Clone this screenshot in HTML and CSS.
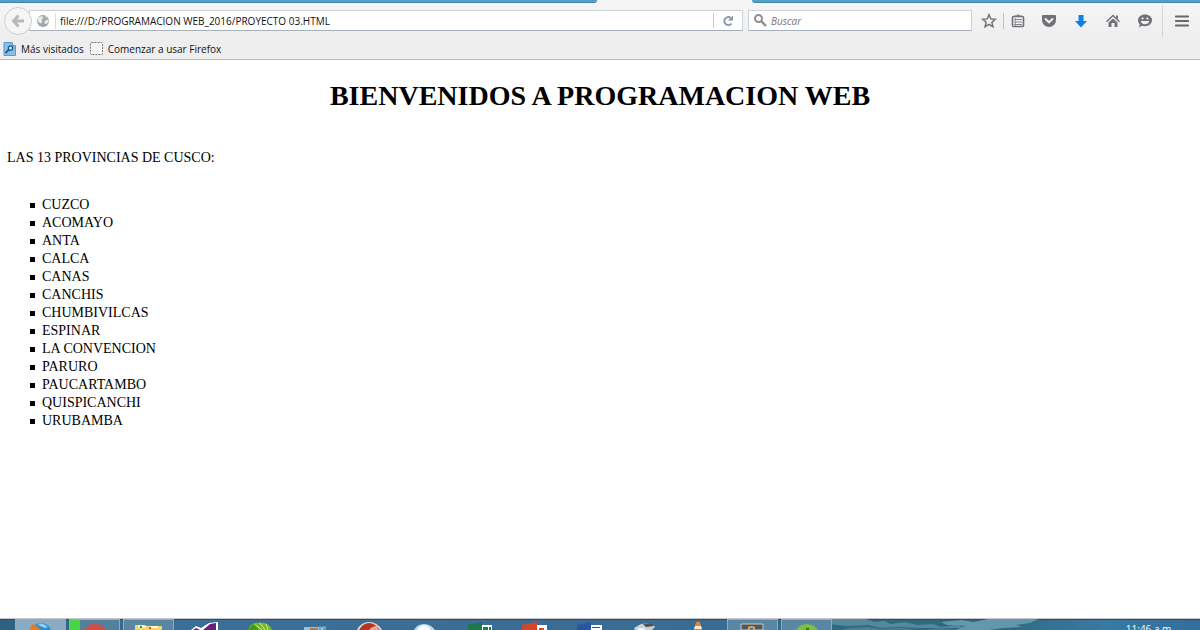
FILE: index.html
```html
<!DOCTYPE html>
<html lang="es">
<head>
    <meta charset="UTF-8">
    <meta name="viewport" content="width=device-width, initial-scale=1.0">
    <title>PROYECTO 03</title>
    <link rel="stylesheet" href="styles.css">
</head>
<body>
    <header class="browser">
        <div class="tab-strip">
            <div class="tab-strip-left"></div>
            <div class="tab-strip-right"></div>
        </div>

        <div class="toolbar">
            <button class="back-button" type="button" aria-label="Atrás">
                <svg width="14" height="14" viewBox="0 0 14 14"><path d="M7.5 1.5L2.500 7l5 5.500M3 7h10" fill="none" stroke="#b9b9b9" stroke-width="3"/></svg>
            </button>
            <div class="url-bar">
                <svg class="globe" width="14" height="14" viewBox="0 0 14 14"><circle cx="7" cy="7" r="6" fill="#a3a6a8"/><path d="M2 3.500L6 2l1.500 2L5.500 6l1 2-2 1.500L1.500 7zM8.500 7l3-1.500L13 7l-2.500 3-2-.5zM9 1.500l2.500 1.500L10 4z" fill="#e9ebec"/></svg>
                <input class="url-input" type="text" aria-label="Dirección" value="file:///D:/PROGRAMACION WEB_2016/PROYECTO 03.HTML">
                <button class="reload-button" type="button" aria-label="Recargar">
                    <svg width="12" height="12" viewBox="0 0 12 12"><path d="M9.500 8.500A4 4 0 1 1 8.500 2.700" fill="none" stroke="#8796a8" stroke-width="2"/><path d="M11 .5v5H6z" fill="#8796a8"/></svg>
                </button>
            </div>
            <div class="search-bar">
                <svg width="13" height="13" viewBox="0 0 13 13"><circle cx="4.500" cy="4.500" r="3.500" fill="none" stroke="#8f8f8f" stroke-width="2"/><path d="M7 7l5 5" stroke="#8f8f8f" stroke-width="2.400"/></svg>
                <input class="search-input" type="text" aria-label="Buscar" placeholder="Buscar">
            </div>
            <div class="toolbar-buttons">
                <button class="tool star" type="button" aria-label="Añadir a marcadores">
                    <svg width="16" height="16" viewBox="0 0 16 16"><path d="M8 1.800l1.800 4.100 4.500.4-3.400 3 1 4.400L8 11.400l-3.900 2.300 1-4.400-3.400-3 4.500-.4z" fill="none" stroke="#707277" stroke-width="1.500"/></svg>
                </button>
                <button class="tool clipboard" type="button" aria-label="Marcadores">
                    <svg width="16" height="16" viewBox="0 0 16 16"><rect x="2.500" y="3.500" width="11" height="10" rx="1" fill="none" stroke="#707277" stroke-width="1.600"/><path d="M4.500 4V2.500H7L8 1l1 1.500h2.500V4z" fill="#707277"/><path d="M4 6.500h8M4 9h8M4 11.500h8" stroke="#85878b"/><path d="M5.500 5v8" stroke="#9a9ca0"/></svg>
                </button>
                <button class="tool" type="button" aria-label="Pocket">
                    <svg width="16" height="16" viewBox="0 0 16 16"><path d="M2 2h12q1 0 1 1v4a7 7 0 0 1-14 0V3q0-1 1-1z" fill="#707277"/><path d="M4.500 6L8 9.300 11.500 6" fill="none" stroke="#f4f4f4" stroke-width="2" stroke-linecap="round"/></svg>
                </button>
                <button class="tool" type="button" aria-label="Descargas">
                    <svg width="16" height="16" viewBox="0 0 16 16"><path d="M5.500 2h5v6H14l-6 6.500L2 8h3.500z" fill="#117fea"/></svg>
                </button>
                <button class="tool" type="button" aria-label="Inicio">
                    <svg width="16" height="16" viewBox="0 0 16 16"><path d="M1.500 8.700L8 2.500l6.500 6.200" fill="none" stroke="#707277" stroke-width="1.500"/><path d="M11 2.500h2V6l-2-1.800zM3.500 9.500L8 5.500l4.500 4v4.500H9.500v-4h-3v4h-3z" fill="#707277"/></svg>
                </button>
                <button class="tool" type="button" aria-label="Hello">
                    <svg width="16" height="16" viewBox="0 0 16 16"><path d="M8 1.500c4 0 7 2.400 7 5.800s-3 5.900-7 5.900c-1 0-2-.2-2.800-.5L2 14.500l.8-3C1.600 10.400 1 9 1 7.300 1 4 4 1.500 8 1.500z" fill="#707277"/><circle cx="5.600" cy="5.500" r="1.100" fill="#f2f2f2"/><circle cx="10.400" cy="5.500" r="1.100" fill="#f2f2f2"/><path d="M3.700 8h8.600c-.6 2.200-2.200 3.200-4.300 3.200S4.300 10.200 3.700 8z" fill="#f2f2f2"/></svg>
                </button>
            </div>
            <button class="menu-button" type="button" aria-label="Abrir menú">
                <svg width="16" height="12" viewBox="0 0 16 12"><path d="M2 1.500h12M2 6h12M2 10.500h12" stroke="#66686c" stroke-width="2.200" stroke-linecap="round"/></svg>
            </button>
        </div>

        <nav class="bookmarks">
            <a class="bookmark" href="#">
                <svg width="13" height="14" viewBox="0 0 13 14"><path d="M1 .5h8.500v3h3v10H1z" fill="#8cbfe4" stroke="#5a9bca"/><circle cx="7.500" cy="6" r="2.200" fill="#c7e3f5" stroke="#245b8c" stroke-width="1.300"/><path d="M6 7.500L2.500 11" stroke="#245b8c" stroke-width="1.800"/></svg>
                Más visitados
            </a>
            <a class="bookmark" href="#">
                <svg width="13" height="13" viewBox="0 0 13 13"><rect x=".5" y=".5" width="12" height="12" rx="1" fill="#f5f5f5" stroke="#777" stroke-dasharray="2 1"/></svg>
                Comenzar a usar Firefox
            </a>
        </nav>
    </header>

    <main class="page">
        <h1 class="page-title">BIENVENIDOS A PROGRAMACION WEB</h1>
        <p class="intro">LAS 13 PROVINCIAS DE CUSCO:</p>
        <ul class="provinces">
            <li>CUZCO</li>
            <li>ACOMAYO</li>
            <li>ANTA</li>
            <li>CALCA</li>
            <li>CANAS</li>
            <li>CANCHIS</li>
            <li>CHUMBIVILCAS</li>
            <li>ESPINAR</li>
            <li>LA CONVENCION</li>
            <li>PARURO</li>
            <li>PAUCARTAMBO</li>
            <li>QUISPICANCHI</li>
            <li>URUBAMBA</li>
        </ul>
    </main>

    <footer class="taskbar">
        <!-- wallpaper showing through the glass -->
        <svg class="wallpaper" viewBox="0 0 368 11" preserveAspectRatio="none">
            <path d="M0 0h38l8 3 10-1 6 3 14-2 12 3 16-1 8 3 16-2 8 3H90L70 8 52 9 40 6 20 7 0 5z" fill="#56879b"/>
            <path d="M112 3l20-2 12 2 14-3h50l-8 4-14 2 6 2-20 1-12 2h-34l10-4-18-1z" fill="#6597ac"/>
            <path d="M20 9l20-1 12 2 22-1 14 2H14z" fill="#4a7f96"/>
            <path d="M96 11l14-2 20 2z" fill="#447c95"/>
        </svg>

        <div class="task-group">
            <button class="task open active" type="button" aria-label="Firefox">
                <svg width="28" height="10" viewBox="0 0 28 10"><path d="M4 10Q7 3 14 3t10 7z" fill="#2b8ed0"/><path d="M11 4q5-2 10 3l-3 1-5-2z" fill="#8ed3ed"/><path d="M3 10q0-4 3-6l1 2 5-1-2 2 4 3z" fill="#e77a22"/></svg>
            </button>
            <button class="task open progress" type="button" aria-label="Descarga">
                <svg width="28" height="10" viewBox="0 0 28 10"><path d="M3 10Q6 4 14 4t11 6z" fill="#d64b46"/></svg>
            </button>
            <button class="task open" type="button" aria-label="Explorador de archivos">
                <svg width="28" height="10" viewBox="0 0 28 10"><path d="M0 5h9l2 1h16v4H0z" fill="#f2d66e"/><path d="M3 5.500h8v2H3zM14 6h9v2h-9z" fill="#fff6ce"/><path d="M5 6h2v2H5z" fill="#2e9b50"/><path d="M14 7h2v2h-2z" fill="#d64a35"/></svg>
            </button>
        </div>

        <div class="launcher-group">
            <button class="task launcher" type="button" aria-label="Visual Studio">
                <svg width="32" height="10" viewBox="0 0 32 10"><path d="M2 10l5-4 5 2 8-5 9-1v8z" fill="#fff"/><path d="M4 10l3-2 4 2zM14 10l7-6 6-1v7z" fill="#68217a"/></svg>
            </button>
            <button class="task launcher" type="button" aria-label="CorelDRAW">
                <svg width="28" height="10" viewBox="0 0 28 10"><path d="M2 10q1-5 7-7 5-1 10 0 6 2 7 7z" fill="#77b82b"/><path d="M8 4l8 6M14 3l5 7M20 4l2 6" stroke="#d5e989" fill="none"/><path d="M3 8l5-4 5 6H2z" fill="#419b16"/></svg>
            </button>
            <button class="task launcher" type="button" aria-label="Editor">
                <svg width="28" height="10" viewBox="0 0 28 10"><path d="M3 7h20v3H3z" fill="#91c6e4"/><path d="M9 8h8v2H9z" fill="#b7764f"/><path d="M18 6h2v4h-2zM22 6h3v4h-3z" fill="#699fc0"/></svg>
            </button>
            <button class="task launcher" type="button" aria-label="Nero">
                <svg width="28" height="10" viewBox="0 0 28 10"><path d="M1 10Q5 2 13 2t13 8z" fill="#e7d7d1"/><path d="M3 10q4-7 10-7t11 7z" fill="#b83422"/><path d="M13 10q3-4 8-4l2 4z" fill="#e1a995"/></svg>
            </button>
            <button class="task launcher" type="button" aria-label="Navegador">
                <svg width="28" height="10" viewBox="0 0 28 10"><path d="M3 10q3-6 10-6t11 6z" fill="#b9daf0"/><path d="M6 10q3-5 7-5t7 5z" fill="#f5fbff"/></svg>
            </button>
            <button class="task launcher" type="button" aria-label="Excel">
                <svg width="30" height="10" viewBox="0 0 30 10"><path d="M3 5l14-3v8H3z" fill="#207846"/><path d="M17 5h10v5H17z" fill="#fff"/><path d="M18 7h5v3h-5zM24 7h2v3h-2z" fill="#207846"/></svg>
            </button>
            <button class="task launcher" type="button" aria-label="PowerPoint">
                <svg width="30" height="10" viewBox="0 0 30 10"><path d="M2 5l15-3v8H2z" fill="#d54629"/><path d="M17 5h10v5H17z" fill="#fff"/><path d="M19 8h5v2h-5z" fill="#d54629"/></svg>
            </button>
            <button class="task launcher" type="button" aria-label="Word">
                <svg width="30" height="10" viewBox="0 0 30 10"><path d="M2 5l14-3v8H2z" fill="#2a579c"/><path d="M16 5h11v5H16z" fill="#fff"/><path d="M17 7h8v1h-8z" fill="#2a579c"/></svg>
            </button>
            <button class="task launcher" type="button" aria-label="Cámara">
                <svg width="28" height="10" viewBox="0 0 28 10"><path d="M3 8l7-4 11-1 3 4-3 3H4z" fill="#c9d0d4"/><path d="M12 4l9-1 2 3-8 1z" fill="#46515a"/><path d="M7 8h6l2 2H7z" fill="#f1f3f4"/></svg>
            </button>
            <button class="task launcher" type="button" aria-label="VLC">
                <svg width="28" height="10" viewBox="0 0 28 10"><path d="M10 2q2-1 4 0l2 8H8z" fill="#ef8122"/><path d="M9 6h6l1 3H8z" fill="#f2ece6"/></svg>
            </button>
        </div>

        <div class="task-group">
            <button class="task open" type="button" aria-label="Reproductor">
                <svg width="26" height="10" viewBox="0 0 26 10"><path d="M1 4h22v6H1z" fill="#52575a" stroke="#c4cacc"/><path d="M8 10V7q3-2 7 0v3h-2V8h-3v2z" fill="#d9a45f"/></svg>
            </button>
            <button class="task open" type="button" aria-label="Camtasia">
                <svg width="28" height="10" viewBox="0 0 28 10"><path d="M3 10q4-6 11-6t11 6z" fill="#80bd43"/><path d="M13 8h3v2h-3z" fill="#36771f"/></svg>
            </button>
        </div>

        <time class="clock">11:46 a.m.</time>
    </footer>
</body>
</html>
```

FILE: styles.css
```css
* {
    box-sizing: border-box;
}

body {
    margin: 0;
    min-height: 100vh;
    display: flex;
    flex-direction: column;
    background-color: #fff;
    color: #000;
    font-family: "Liberation Serif", "Times New Roman", serif;
    font-size: 14px;
}

button {
    padding: 0;
    border: 0;
    background: none;
}

svg {
    display: block;
    flex-shrink: 0;
}

/* Browser chrome */
.browser {
    background: linear-gradient(#f6f6f6, #eee 38px);
    border-bottom: 1px solid #b9b9b9;
    font-family: "Open Sans", "Segoe UI", sans-serif;
    font-size: 10px;
}

.tab-strip {
    display: grid;
    grid-template-columns: 597fr 155fr 448fr;
    height: 3px;
}

.tab-strip-left,
.tab-strip-right {
    background-color: #55a0ca;
    border-bottom: 1px solid #4386ad;
}

.tab-strip-left {
    border-bottom-right-radius: 4px;
}

.tab-strip-right {
    grid-column: 3;
    border-bottom-left-radius: 4px;
}

.toolbar {
    display: flex;
    align-items: center;
    height: 35px;
    padding-left: 4px;
}

.back-button {
    display: flex;
    align-items: center;
    justify-content: center;
    width: 28px;
    height: 28px;
    margin-right: -3px;
    border: 1px solid #cfcfcf;
    border-radius: 50%;
    background-color: #f5f5f5;
    z-index: 1;
}

.url-bar,
.search-bar {
    display: flex;
    align-items: center;
    height: 21px;
    border: 1px solid #cdd2d8;
    border-bottom-color: #a5b0bc;
    background-color: #fff;
}

.url-bar {
    flex: 1;
    padding-left: 6px;
}

.url-input,
.search-input {
    flex: 1;
    min-width: 0;
    height: 16px;
    padding: 0;
    border: 0;
    outline: 0;
    background: none;
    color: #111;
    font-family: inherit;
    font-size: 10px;
}

.url-input {
    margin-left: 5px;
    padding-left: 4px;
    border-left: 1px solid #ddd;
}

.reload-button {
    display: flex;
    align-items: center;
    justify-content: center;
    width: 29px;
    height: 15px;
    border-left: 1px solid #c8cdd2;
}

.search-bar {
    flex: 0 0 224px;
    gap: 4px;
    margin-left: 5px;
    padding-left: 5px;
}

.search-input::placeholder {
    color: #777;
    font-style: italic;
    opacity: 1;
}

.toolbar-buttons {
    display: flex;
    align-items: center;
    padding: 0 1px 0 3px;
}

.tool {
    display: flex;
    align-items: center;
    justify-content: center;
    width: 32px;
    height: 16px;
}

.star {
    width: 29px;
    border-right: 1px solid #c4c4c4;
}

.clipboard {
    width: 28px;
    margin-right: 1px;
}

.menu-button {
    display: flex;
    align-items: center;
    justify-content: center;
    width: 38px;
    height: 32px;
    border-left: 1px solid #d6d6d6;
}

.bookmarks {
    display: flex;
    align-items: center;
    gap: 6px;
    height: 21px;
    padding-left: 3px;
}

.bookmark {
    display: flex;
    align-items: center;
    gap: 5px;
    color: #111;
    text-decoration: none;
}

/* Page content */
.page {
    flex: 1;
    padding: 0 7px;
}

.page-title {
    margin: 20px 0 36px;
    font-size: 28px;
    line-height: 32px;
    text-align: center;
}

.intro {
    margin: 0 0 28px;
    line-height: 20px;
}

.provinces {
    margin: 0;
    padding-left: 23px;
    line-height: 18px;
    list-style: none;
}

.provinces li {
    display: flex;
    align-items: center;
}

.provinces li::before {
    content: "";
    width: 5px;
    height: 5px;
    margin-right: 7px;
    background-color: #000;
}

/* Taskbar */
.taskbar {
    position: relative;
    display: flex;
    height: 12px;
    padding-left: 15px;
    overflow: hidden;
    border-top: 1px solid #c4c8ca;
    background: linear-gradient(90deg, #2f6080, #3b6e96 15%, #3a6b93 60%, #2f6a80 70%, #2c687f 82%, #3a79a0 92%, #316f9b);
    box-shadow: inset 0 1px #1f5470;
}

.wallpaper {
    position: absolute;
    left: 69%;
    width: 31%;
    height: 11px;
}

.task-group {
    position: relative;
    display: flex;
    gap: 3px;
}

.launcher-group {
    display: flex;
    margin-left: 3px;
}

.task {
    display: flex;
    justify-content: center;
    width: 51px;
    height: 11px;
}

.task svg {
    margin-top: 1px;
}

.open {
    border: 1px solid #8fabbd;
    border-bottom: 0;
    background-color: #5b86a3;
}

.open svg {
    margin-top: 0;
}

.active {
    background-color: #8aabc2;
}

.progress {
    background: linear-gradient(90deg, #47d447 10px, #55809d 10px);
}

.launcher {
    width: 55px;
}

.clock {
    position: relative;
    margin-left: auto;
    padding: 3px 26px 0 0;
    color: #fff;
    font-family: "Open Sans", "Segoe UI", sans-serif;
    font-size: 10px;
    line-height: 14px;
}
```
